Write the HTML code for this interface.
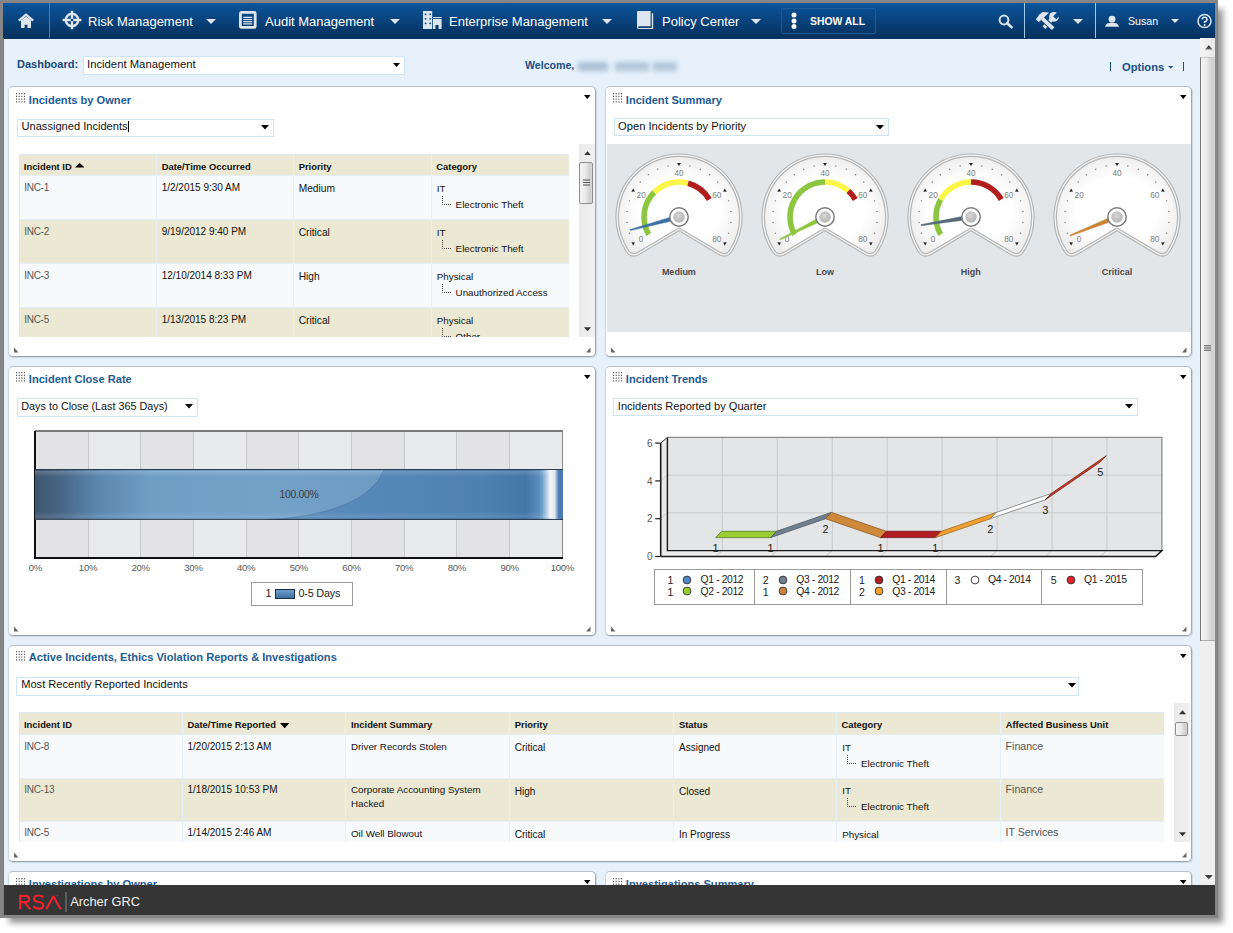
<!DOCTYPE html><html><head><meta charset="utf-8"><style>
*{box-sizing:border-box;margin:0;padding:0}
html,body{width:1233px;height:933px;overflow:hidden;background:#fff;font-family:"Liberation Sans",sans-serif;}
.a{position:absolute}
#frame{position:absolute;left:0;top:0;width:1217.8px;height:917.5px;background:#868686;box-shadow:7px 7px 6px -2px rgba(0,0,0,.42)}
#app{position:absolute;left:3px;top:3px;width:1212px;height:912px;background:#e6f1fb;overflow:hidden}
#nav{position:absolute;left:0;top:0;width:1212px;height:36.2px;background:linear-gradient(#0b559b,#062f5c)}
.nt{position:absolute;color:#fff;font-size:13px;white-space:nowrap;top:11px}
.tri{position:absolute;width:0;height:0;border-left:5px solid transparent;border-right:5px solid transparent;border-top:5px solid #dfe6ee}
.sep{position:absolute;top:0;width:1px;height:35px;background:#4f86bd}
#foot{position:absolute;left:0;top:882px;width:1212px;height:30px;background:#353535}
.panel{position:absolute;background:#fff;border:1px solid #aab6c0;border-left-color:#c9d8e5;border-top-color:#b3c0cb;border-right-color:#9eabb6;border-bottom-color:#97a4af;border-radius:5px;box-shadow:0.5px 1px 1px rgba(0,0,0,.10)}
.ptitle{position:absolute;left:20px;top:6px;color:#1d5b94;font-weight:bold;font-size:11.2px;white-space:nowrap}
.grip{position:absolute;left:7px;top:6px;width:9px;height:10px;background-image:radial-gradient(circle,#777 0.6px,transparent 0.9px);background-size:2.4px 2.4px}
.pdd{position:absolute;width:0;height:0;border-left:3.5px solid transparent;border-right:3.5px solid transparent;border-top:4px solid #000}
.sel{position:absolute;background:#fff;border:1px solid #c6def2;font-size:11.3px;color:#111;white-space:nowrap;padding-left:5px;line-height:17px}
.sel .dd{position:absolute;right:8px;top:7px;width:0;height:0;border-left:4px solid transparent;border-right:4px solid transparent;border-top:5px solid #000}
</style></head><body>
<div id="frame"></div><div id="app">
<div class="a" style="left:0.00px;top:35.00px;width:1.00px;height:847.00px;background:#5584b5;z-index:5"></div>
<div id="nav">
<svg class="a" style="left:14px;top:10px" width="18" height="17" viewBox="0 0 18 17"><path d="M1.8,7.6 L9,1.6 L16.2,7.6" fill="none" stroke="#dde5ee" stroke-width="2.2" stroke-linejoin="miter"/><path d="M4,7.2 L9,3.4 L14,7.2 L14,15 L10.4,15 L10.4,11.8 L7.6,11.8 L7.6,15 L4,15 Z" fill="#dde5ee"/></svg>
<div class="sep" style="left:46px;background:#4a80b8"></div>
<svg class="a" style="left:58px;top:6px" width="22" height="22" viewBox="0 0 22 22"><circle cx="11" cy="11" r="6.2" fill="none" stroke="#dde5ee" stroke-width="2.4"/><path d="M11,1.8 V20.2 M1.6,11 H20.4" stroke="#dde5ee" stroke-width="2.4"/><circle cx="11" cy="11" r="1.3" fill="#0a3f78"/></svg>
<div class="nt" style="left:85px">Risk Management</div>
<div class="tri" style="left:203px;top:16px"></div>
<svg class="a" style="left:235px;top:7px" width="20" height="20" viewBox="0 0 20 20"><rect x="2.4" y="2.4" width="14.8" height="15" rx="1" fill="none" stroke="#dde5ee" stroke-width="2.8"/><path d="M5.2,7.3 H14.2 M5.2,9.5 H14.2 M5.2,11.7 H14.2 M5.2,13.8 H14.2" stroke="#dde5ee" stroke-width="1.2"/></svg>
<div class="nt" style="left:262px">Audit Management</div>
<div class="tri" style="left:387px;top:16px"></div>
<svg class="a" style="left:419px;top:7px" width="21" height="20" viewBox="0 0 21 20"><rect x="1" y="1" width="9.2" height="18" fill="#dde5ee"/><rect x="11" y="7" width="8.6" height="1.1" fill="#dde5ee"/><rect x="11" y="9" width="8.6" height="10" fill="#dde5ee"/><rect x="13.4" y="15" width="3.2" height="4" fill="#0a3c72"/><g fill="#0a3c72"><circle cx="3.6" cy="4.3" r="0.9"/><circle cx="8.2" cy="4.3" r="0.9"/><circle cx="3.6" cy="8.8" r="0.9"/><circle cx="8.2" cy="8.8" r="0.9"/><circle cx="3.6" cy="13.3" r="0.9"/><circle cx="8.2" cy="13.3" r="0.9"/></g></svg>
<div class="nt" style="left:446px">Enterprise Management</div>
<div class="tri" style="left:599px;top:16px"></div>
<svg class="a" style="left:633px;top:7px" width="19" height="20" viewBox="0 0 19 20"><path d="M1,2.2 Q1,1 2.2,1 H14.6 V16.2 H3.2 Q2,16.2 2,17.2 Q2,18 3.2,18 H15.8 V3.2 H17.2 V19 H2.4 Q1,19 1,17.6 Z" fill="#dde5ee"/></svg>
<div class="nt" style="left:659px">Policy Center</div>
<div class="tri" style="left:748px;top:16px"></div>
<div class="a" style="left:778px;top:5px;width:95px;height:26px;border:1px solid #1d5a98;border-radius:2px"></div>
<svg class="a" style="left:787px;top:8px" width="8" height="18" viewBox="0 0 8 18"><circle cx="4" cy="4" r="2.5" fill="#fff"/><circle cx="4" cy="10" r="2.5" fill="#fff"/><circle cx="4" cy="15.5" r="2.5" fill="#fff"/></svg>
<div class="nt" style="left:807px;top:12.6px;font-size:10.4px;font-weight:bold">SHOW ALL</div>
<svg class="a" style="left:994px;top:10px" width="18" height="17" viewBox="0 0 18 17"><circle cx="7" cy="7" r="4.4" fill="none" stroke="#dde5ee" stroke-width="2"/><path d="M10.2,10.2 L14.6,14.2" stroke="#dde5ee" stroke-width="2.6" stroke-linecap="round"/></svg>
<div class="sep" style="left:1021px;background:#9cc8ec"></div>
<svg class="a" style="left:1027px;top:5px" width="36" height="24" viewBox="0 0 36 24"><defs><mask id="wm"><rect x="0" y="0" width="36" height="24" fill="#fff"/><path d="M23.2,8.2 L28.5,2.9 L31.5,5.9 L26.2,11.2 Z" fill="#000"/></mask></defs><g mask="url(#wm)"><circle cx="24" cy="8.8" r="4.9" fill="#dde5ee"/></g><path d="M22.5,10.5 L14,19.6" stroke="#dde5ee" stroke-width="4"/><path d="M12.4,10.6 L23.2,20.6" stroke="#0b3f77" stroke-width="5.6"/><path d="M12.4,10.6 L23.2,20.6" stroke="#dde5ee" stroke-width="3.8"/><path d="M5.8,11.4 L9.3,6.6 L12.6,4.1 L19,4.4 L14,9.6 L8.8,14 Z" fill="#dde5ee"/></svg>
<div class="tri" style="left:1070px;top:16px"></div>
<div class="sep" style="left:1092px;background:#9cc8ec"></div>
<svg class="a" style="left:1101px;top:11px" width="17" height="14" viewBox="0 0 17 14"><circle cx="8" cy="5.2" r="3.4" fill="#dde5ee"/><path d="M1,12.8 Q2,9.2 5.2,9 H10.8 Q14,9.2 15,12.8 Z" fill="#dde5ee"/></svg>
<div class="nt" style="left:1125px;top:12px;font-size:10.6px">Susan</div>
<div class="tri" style="left:1168px;top:16px;border-left-width:4.5px;border-right-width:4.5px;border-top-width:4.5px"></div>
<svg class="a" style="left:1193px;top:10px" width="17" height="17" viewBox="0 0 17 17"><circle cx="8.5" cy="8.1" r="6.5" fill="none" stroke="#dde5ee" stroke-width="1.5"/><path d="M6.2,6.6 Q6.2,4.2 8.6,4.2 Q11,4.2 11,6.4 Q11,8 8.6,9 V10" fill="none" stroke="#dde5ee" stroke-width="1.6"/><circle cx="8.6" cy="12" r="1" fill="#dde5ee"/></svg>
</div>
<div class="a" style="left:14.00px;top:56.49px;font-size:11px;line-height:11px;font-weight:700;color:#1a4878;white-space:nowrap;">Dashboard:</div>
<div class="a" style="left:79.50px;top:52.50px;width:322.00px;height:19.00px;background:#fff;border:1px solid #cde5f8"></div>
<div class="a" style="left:84.00px;top:56.23px;font-size:11.3px;line-height:11.3px;font-weight:400;color:#111;white-space:nowrap;">Incident Management</div>
<svg class="a" style="left:390.00px;top:60.00px;" width="7" height="4" viewBox="0 0 7 4"><path d="M0,0 H7 L3.5,4 Z" fill="#000"/></svg>
<div class="a" style="left:522.00px;top:57.03px;font-size:10.6px;line-height:10.6px;font-weight:700;color:#1d4e85;white-space:nowrap;">Welcome,</div>
<div class="a" style="left:574.00px;top:56.50px;width:100.00px;height:13.00px;filter:blur(2.6px)"><div class="a" style="left:1px;top:2.5px;width:30px;height:9px;background:rgba(90,125,160,.42)"></div><div class="a" style="left:38px;top:2.5px;width:34px;height:9px;background:rgba(90,125,160,.38)"></div><div class="a" style="left:76px;top:2.5px;width:24px;height:9px;background:rgba(90,125,160,.38)"></div></div>
<div class="a" style="left:1107.00px;top:58.50px;width:1.30px;height:9.30px;background:#1d4e85"></div>
<div class="a" style="left:1119.00px;top:58.52px;font-size:11.2px;line-height:11.2px;font-weight:700;color:#1d4e85;white-space:nowrap;">Options</div>
<svg class="a" style="left:1164.50px;top:63.20px;" width="5.5" height="2.6" viewBox="0 0 5.5 2.6"><path d="M0,0 H5.5 L2.75,2.6 Z" fill="#1d4e85"/></svg>
<div class="a" style="left:1180.00px;top:58.50px;width:1.30px;height:9.30px;background:#1d4e85"></div>
<div class="panel" style="left:5.00px;top:83.00px;width:588.00px;height:271.00px;"></div>
<svg class="a" style="left:11.50px;top:90.40px;" width="10" height="11" viewBox="0 0 10 11"><rect x="1.00" y="0.00" width="1.1" height="1.3" fill="#5a5a5a"/><rect x="1.00" y="2.75" width="1.1" height="1.3" fill="#5a5a5a"/><rect x="1.00" y="5.50" width="1.1" height="1.3" fill="#5a5a5a"/><rect x="1.00" y="8.25" width="1.1" height="1.3" fill="#5a5a5a"/><rect x="3.65" y="0.00" width="1.1" height="1.3" fill="#5a5a5a"/><rect x="3.65" y="2.75" width="1.1" height="1.3" fill="#5a5a5a"/><rect x="3.65" y="5.50" width="1.1" height="1.3" fill="#5a5a5a"/><rect x="3.65" y="8.25" width="1.1" height="1.3" fill="#5a5a5a"/><rect x="6.30" y="0.00" width="1.1" height="1.3" fill="#5a5a5a"/><rect x="6.30" y="2.75" width="1.1" height="1.3" fill="#5a5a5a"/><rect x="6.30" y="5.50" width="1.1" height="1.3" fill="#5a5a5a"/><rect x="6.30" y="8.25" width="1.1" height="1.3" fill="#5a5a5a"/><rect x="8.95" y="0.00" width="1.1" height="1.3" fill="#5a5a5a"/><rect x="8.95" y="2.75" width="1.1" height="1.3" fill="#5a5a5a"/><rect x="8.95" y="5.50" width="1.1" height="1.3" fill="#5a5a5a"/><rect x="8.95" y="8.25" width="1.1" height="1.3" fill="#5a5a5a"/></svg>
<div class="a" style="left:25.80px;top:91.60px;font-size:11.1px;line-height:11.1px;font-weight:700;color:#1d5b94;white-space:nowrap;">Incidents by Owner</div>
<svg class="a" style="left:581.00px;top:92.00px;" width="6.5" height="4.2" viewBox="0 0 6.5 4.2"><path d="M0,0 H6.5 L3.25,4.2 Z" fill="#000"/></svg>
<svg class="a" style="left:9.50px;top:343.50px;" width="7" height="7" viewBox="0 0 7 7"><path d="M1,0.5 L1,5.5 L5.5,5.5 Z" fill="#666"/></svg>
<svg class="a" style="left:582.00px;top:343.50px;" width="7" height="7" viewBox="0 0 7 7"><path d="M5.5,0.5 L5.5,5.5 L1,5.5 Z" fill="#666"/></svg>
<div class="panel" style="left:602.00px;top:83.00px;width:587.00px;height:271.00px;"></div>
<svg class="a" style="left:608.50px;top:90.40px;" width="10" height="11" viewBox="0 0 10 11"><rect x="1.00" y="0.00" width="1.1" height="1.3" fill="#5a5a5a"/><rect x="1.00" y="2.75" width="1.1" height="1.3" fill="#5a5a5a"/><rect x="1.00" y="5.50" width="1.1" height="1.3" fill="#5a5a5a"/><rect x="1.00" y="8.25" width="1.1" height="1.3" fill="#5a5a5a"/><rect x="3.65" y="0.00" width="1.1" height="1.3" fill="#5a5a5a"/><rect x="3.65" y="2.75" width="1.1" height="1.3" fill="#5a5a5a"/><rect x="3.65" y="5.50" width="1.1" height="1.3" fill="#5a5a5a"/><rect x="3.65" y="8.25" width="1.1" height="1.3" fill="#5a5a5a"/><rect x="6.30" y="0.00" width="1.1" height="1.3" fill="#5a5a5a"/><rect x="6.30" y="2.75" width="1.1" height="1.3" fill="#5a5a5a"/><rect x="6.30" y="5.50" width="1.1" height="1.3" fill="#5a5a5a"/><rect x="6.30" y="8.25" width="1.1" height="1.3" fill="#5a5a5a"/><rect x="8.95" y="0.00" width="1.1" height="1.3" fill="#5a5a5a"/><rect x="8.95" y="2.75" width="1.1" height="1.3" fill="#5a5a5a"/><rect x="8.95" y="5.50" width="1.1" height="1.3" fill="#5a5a5a"/><rect x="8.95" y="8.25" width="1.1" height="1.3" fill="#5a5a5a"/></svg>
<div class="a" style="left:622.80px;top:91.60px;font-size:11.1px;line-height:11.1px;font-weight:700;color:#1d5b94;white-space:nowrap;">Incident Summary</div>
<svg class="a" style="left:1177.00px;top:92.00px;" width="6.5" height="4.2" viewBox="0 0 6.5 4.2"><path d="M0,0 H6.5 L3.25,4.2 Z" fill="#000"/></svg>
<svg class="a" style="left:606.50px;top:343.50px;" width="7" height="7" viewBox="0 0 7 7"><path d="M1,0.5 L1,5.5 L5.5,5.5 Z" fill="#666"/></svg>
<svg class="a" style="left:1178.00px;top:343.50px;" width="7" height="7" viewBox="0 0 7 7"><path d="M5.5,0.5 L5.5,5.5 L1,5.5 Z" fill="#666"/></svg>
<div class="panel" style="left:5.00px;top:363.00px;width:588.00px;height:270.00px;"></div>
<svg class="a" style="left:11.50px;top:369.30px;" width="10" height="11" viewBox="0 0 10 11"><rect x="1.00" y="0.00" width="1.1" height="1.3" fill="#5a5a5a"/><rect x="1.00" y="2.75" width="1.1" height="1.3" fill="#5a5a5a"/><rect x="1.00" y="5.50" width="1.1" height="1.3" fill="#5a5a5a"/><rect x="1.00" y="8.25" width="1.1" height="1.3" fill="#5a5a5a"/><rect x="3.65" y="0.00" width="1.1" height="1.3" fill="#5a5a5a"/><rect x="3.65" y="2.75" width="1.1" height="1.3" fill="#5a5a5a"/><rect x="3.65" y="5.50" width="1.1" height="1.3" fill="#5a5a5a"/><rect x="3.65" y="8.25" width="1.1" height="1.3" fill="#5a5a5a"/><rect x="6.30" y="0.00" width="1.1" height="1.3" fill="#5a5a5a"/><rect x="6.30" y="2.75" width="1.1" height="1.3" fill="#5a5a5a"/><rect x="6.30" y="5.50" width="1.1" height="1.3" fill="#5a5a5a"/><rect x="6.30" y="8.25" width="1.1" height="1.3" fill="#5a5a5a"/><rect x="8.95" y="0.00" width="1.1" height="1.3" fill="#5a5a5a"/><rect x="8.95" y="2.75" width="1.1" height="1.3" fill="#5a5a5a"/><rect x="8.95" y="5.50" width="1.1" height="1.3" fill="#5a5a5a"/><rect x="8.95" y="8.25" width="1.1" height="1.3" fill="#5a5a5a"/></svg>
<div class="a" style="left:25.80px;top:370.50px;font-size:11.1px;line-height:11.1px;font-weight:700;color:#1d5b94;white-space:nowrap;">Incident Close Rate</div>
<svg class="a" style="left:581.00px;top:372.00px;" width="6.5" height="4.2" viewBox="0 0 6.5 4.2"><path d="M0,0 H6.5 L3.25,4.2 Z" fill="#000"/></svg>
<svg class="a" style="left:9.50px;top:622.50px;" width="7" height="7" viewBox="0 0 7 7"><path d="M1,0.5 L1,5.5 L5.5,5.5 Z" fill="#666"/></svg>
<svg class="a" style="left:582.00px;top:622.50px;" width="7" height="7" viewBox="0 0 7 7"><path d="M5.5,0.5 L5.5,5.5 L1,5.5 Z" fill="#666"/></svg>
<div class="panel" style="left:602.00px;top:363.00px;width:587.00px;height:270.00px;"></div>
<svg class="a" style="left:608.50px;top:369.30px;" width="10" height="11" viewBox="0 0 10 11"><rect x="1.00" y="0.00" width="1.1" height="1.3" fill="#5a5a5a"/><rect x="1.00" y="2.75" width="1.1" height="1.3" fill="#5a5a5a"/><rect x="1.00" y="5.50" width="1.1" height="1.3" fill="#5a5a5a"/><rect x="1.00" y="8.25" width="1.1" height="1.3" fill="#5a5a5a"/><rect x="3.65" y="0.00" width="1.1" height="1.3" fill="#5a5a5a"/><rect x="3.65" y="2.75" width="1.1" height="1.3" fill="#5a5a5a"/><rect x="3.65" y="5.50" width="1.1" height="1.3" fill="#5a5a5a"/><rect x="3.65" y="8.25" width="1.1" height="1.3" fill="#5a5a5a"/><rect x="6.30" y="0.00" width="1.1" height="1.3" fill="#5a5a5a"/><rect x="6.30" y="2.75" width="1.1" height="1.3" fill="#5a5a5a"/><rect x="6.30" y="5.50" width="1.1" height="1.3" fill="#5a5a5a"/><rect x="6.30" y="8.25" width="1.1" height="1.3" fill="#5a5a5a"/><rect x="8.95" y="0.00" width="1.1" height="1.3" fill="#5a5a5a"/><rect x="8.95" y="2.75" width="1.1" height="1.3" fill="#5a5a5a"/><rect x="8.95" y="5.50" width="1.1" height="1.3" fill="#5a5a5a"/><rect x="8.95" y="8.25" width="1.1" height="1.3" fill="#5a5a5a"/></svg>
<div class="a" style="left:622.80px;top:370.50px;font-size:11.1px;line-height:11.1px;font-weight:700;color:#1d5b94;white-space:nowrap;">Incident Trends</div>
<svg class="a" style="left:1177.00px;top:372.00px;" width="6.5" height="4.2" viewBox="0 0 6.5 4.2"><path d="M0,0 H6.5 L3.25,4.2 Z" fill="#000"/></svg>
<svg class="a" style="left:606.50px;top:622.50px;" width="7" height="7" viewBox="0 0 7 7"><path d="M1,0.5 L1,5.5 L5.5,5.5 Z" fill="#666"/></svg>
<svg class="a" style="left:1178.00px;top:622.50px;" width="7" height="7" viewBox="0 0 7 7"><path d="M5.5,0.5 L5.5,5.5 L1,5.5 Z" fill="#666"/></svg>
<div class="panel" style="left:5.00px;top:642.00px;width:1184.00px;height:217.00px;"></div>
<svg class="a" style="left:11.50px;top:647.90px;" width="10" height="11" viewBox="0 0 10 11"><rect x="1.00" y="0.00" width="1.1" height="1.3" fill="#5a5a5a"/><rect x="1.00" y="2.75" width="1.1" height="1.3" fill="#5a5a5a"/><rect x="1.00" y="5.50" width="1.1" height="1.3" fill="#5a5a5a"/><rect x="1.00" y="8.25" width="1.1" height="1.3" fill="#5a5a5a"/><rect x="3.65" y="0.00" width="1.1" height="1.3" fill="#5a5a5a"/><rect x="3.65" y="2.75" width="1.1" height="1.3" fill="#5a5a5a"/><rect x="3.65" y="5.50" width="1.1" height="1.3" fill="#5a5a5a"/><rect x="3.65" y="8.25" width="1.1" height="1.3" fill="#5a5a5a"/><rect x="6.30" y="0.00" width="1.1" height="1.3" fill="#5a5a5a"/><rect x="6.30" y="2.75" width="1.1" height="1.3" fill="#5a5a5a"/><rect x="6.30" y="5.50" width="1.1" height="1.3" fill="#5a5a5a"/><rect x="6.30" y="8.25" width="1.1" height="1.3" fill="#5a5a5a"/><rect x="8.95" y="0.00" width="1.1" height="1.3" fill="#5a5a5a"/><rect x="8.95" y="2.75" width="1.1" height="1.3" fill="#5a5a5a"/><rect x="8.95" y="5.50" width="1.1" height="1.3" fill="#5a5a5a"/><rect x="8.95" y="8.25" width="1.1" height="1.3" fill="#5a5a5a"/></svg>
<div class="a" style="left:25.80px;top:649.10px;font-size:11.1px;line-height:11.1px;font-weight:700;color:#1d5b94;white-space:nowrap;">Active Incidents, Ethics Violation Reports &amp; Investigations</div>
<svg class="a" style="left:1177.00px;top:651.00px;" width="6.5" height="4.2" viewBox="0 0 6.5 4.2"><path d="M0,0 H6.5 L3.25,4.2 Z" fill="#000"/></svg>
<svg class="a" style="left:9.50px;top:848.50px;" width="7" height="7" viewBox="0 0 7 7"><path d="M1,0.5 L1,5.5 L5.5,5.5 Z" fill="#666"/></svg>
<svg class="a" style="left:1178.00px;top:848.50px;" width="7" height="7" viewBox="0 0 7 7"><path d="M5.5,0.5 L5.5,5.5 L1,5.5 Z" fill="#666"/></svg>
<div class="panel" style="left:5.00px;top:868.00px;width:588.00px;height:89.00px;"></div>
<svg class="a" style="left:11.50px;top:874.90px;" width="10" height="11" viewBox="0 0 10 11"><rect x="1.00" y="0.00" width="1.1" height="1.3" fill="#5a5a5a"/><rect x="1.00" y="2.75" width="1.1" height="1.3" fill="#5a5a5a"/><rect x="1.00" y="5.50" width="1.1" height="1.3" fill="#5a5a5a"/><rect x="1.00" y="8.25" width="1.1" height="1.3" fill="#5a5a5a"/><rect x="3.65" y="0.00" width="1.1" height="1.3" fill="#5a5a5a"/><rect x="3.65" y="2.75" width="1.1" height="1.3" fill="#5a5a5a"/><rect x="3.65" y="5.50" width="1.1" height="1.3" fill="#5a5a5a"/><rect x="3.65" y="8.25" width="1.1" height="1.3" fill="#5a5a5a"/><rect x="6.30" y="0.00" width="1.1" height="1.3" fill="#5a5a5a"/><rect x="6.30" y="2.75" width="1.1" height="1.3" fill="#5a5a5a"/><rect x="6.30" y="5.50" width="1.1" height="1.3" fill="#5a5a5a"/><rect x="6.30" y="8.25" width="1.1" height="1.3" fill="#5a5a5a"/><rect x="8.95" y="0.00" width="1.1" height="1.3" fill="#5a5a5a"/><rect x="8.95" y="2.75" width="1.1" height="1.3" fill="#5a5a5a"/><rect x="8.95" y="5.50" width="1.1" height="1.3" fill="#5a5a5a"/><rect x="8.95" y="8.25" width="1.1" height="1.3" fill="#5a5a5a"/></svg>
<div class="a" style="left:25.80px;top:876.10px;font-size:11.1px;line-height:11.1px;font-weight:700;color:#1d5b94;white-space:nowrap;">Investigations by Owner</div>
<svg class="a" style="left:581.00px;top:877.00px;" width="6.5" height="4.2" viewBox="0 0 6.5 4.2"><path d="M0,0 H6.5 L3.25,4.2 Z" fill="#000"/></svg>
<svg class="a" style="left:9.50px;top:946.50px;" width="7" height="7" viewBox="0 0 7 7"><path d="M1,0.5 L1,5.5 L5.5,5.5 Z" fill="#666"/></svg>
<svg class="a" style="left:582.00px;top:946.50px;" width="7" height="7" viewBox="0 0 7 7"><path d="M5.5,0.5 L5.5,5.5 L1,5.5 Z" fill="#666"/></svg>
<div class="panel" style="left:602.00px;top:868.00px;width:587.00px;height:89.00px;"></div>
<svg class="a" style="left:608.50px;top:874.90px;" width="10" height="11" viewBox="0 0 10 11"><rect x="1.00" y="0.00" width="1.1" height="1.3" fill="#5a5a5a"/><rect x="1.00" y="2.75" width="1.1" height="1.3" fill="#5a5a5a"/><rect x="1.00" y="5.50" width="1.1" height="1.3" fill="#5a5a5a"/><rect x="1.00" y="8.25" width="1.1" height="1.3" fill="#5a5a5a"/><rect x="3.65" y="0.00" width="1.1" height="1.3" fill="#5a5a5a"/><rect x="3.65" y="2.75" width="1.1" height="1.3" fill="#5a5a5a"/><rect x="3.65" y="5.50" width="1.1" height="1.3" fill="#5a5a5a"/><rect x="3.65" y="8.25" width="1.1" height="1.3" fill="#5a5a5a"/><rect x="6.30" y="0.00" width="1.1" height="1.3" fill="#5a5a5a"/><rect x="6.30" y="2.75" width="1.1" height="1.3" fill="#5a5a5a"/><rect x="6.30" y="5.50" width="1.1" height="1.3" fill="#5a5a5a"/><rect x="6.30" y="8.25" width="1.1" height="1.3" fill="#5a5a5a"/><rect x="8.95" y="0.00" width="1.1" height="1.3" fill="#5a5a5a"/><rect x="8.95" y="2.75" width="1.1" height="1.3" fill="#5a5a5a"/><rect x="8.95" y="5.50" width="1.1" height="1.3" fill="#5a5a5a"/><rect x="8.95" y="8.25" width="1.1" height="1.3" fill="#5a5a5a"/></svg>
<div class="a" style="left:622.80px;top:876.10px;font-size:11.1px;line-height:11.1px;font-weight:700;color:#1d5b94;white-space:nowrap;">Investigations Summary</div>
<svg class="a" style="left:1177.00px;top:877.00px;" width="6.5" height="4.2" viewBox="0 0 6.5 4.2"><path d="M0,0 H6.5 L3.25,4.2 Z" fill="#000"/></svg>
<svg class="a" style="left:606.50px;top:946.50px;" width="7" height="7" viewBox="0 0 7 7"><path d="M1,0.5 L1,5.5 L5.5,5.5 Z" fill="#666"/></svg>
<svg class="a" style="left:1178.00px;top:946.50px;" width="7" height="7" viewBox="0 0 7 7"><path d="M5.5,0.5 L5.5,5.5 L1,5.5 Z" fill="#666"/></svg>
<div class="a" style="left:13.50px;top:115.50px;width:257.00px;height:18.30px;background:#fff;border:1px solid #cde5f8"></div>
<div class="a" style="left:18.50px;top:118.10px;font-size:11.1px;line-height:11.1px;font-weight:400;color:#111;white-space:nowrap;">Unassigned Incidents</div>
<svg class="a" style="left:257.50px;top:122.00px;" width="8" height="4.5" viewBox="0 0 8 4.5"><path d="M0,0 H8 L4.0,4.5 Z" fill="#000"/></svg>
<div class="a" style="left:124.50px;top:117.50px;width:1.00px;height:11.50px;background:#000"></div>
<div class="a" style="left:15.50px;top:150.80px;width:550.00px;height:182.80px;overflow:hidden">
<div class="a" style="left:0.00px;top:0.00px;width:550.00px;height:21.20px;background:#ebe9d3;border-top:1px solid #dbe9f5"></div>
<div class="a" style="left:0.00px;top:0.00px;width:1.00px;height:182.80px;background:#dbe9f5;z-index:2"></div>
<div class="a" style="left:0.00px;top:21.20px;width:550.00px;height:44.00px;background:#f8f9fb;border-top:1px solid #e2eef8"></div>
<div class="a" style="left:0.00px;top:65.20px;width:550.00px;height:44.00px;background:#ebe9d3;border-top:1px solid #e2eef8"></div>
<div class="a" style="left:0.00px;top:109.20px;width:550.00px;height:44.00px;background:#f8f9fb;border-top:1px solid #e2eef8"></div>
<div class="a" style="left:0.00px;top:153.20px;width:550.00px;height:44.00px;background:#ebe9d3;border-top:1px solid #e2eef8"></div>
<div class="a" style="left:137.40px;top:0.00px;width:1.00px;height:182.80px;background:#e6f0f9"></div>
<div class="a" style="left:274.40px;top:0.00px;width:1.00px;height:182.80px;background:#e6f0f9"></div>
<div class="a" style="left:412.00px;top:0.00px;width:1.00px;height:182.80px;background:#e6f0f9"></div>
<div class="a" style="left:5.30px;top:8.04px;font-size:9.4px;line-height:9.4px;font-weight:700;color:#111;white-space:nowrap;">Incident ID</div>
<div class="a" style="left:143.20px;top:8.04px;font-size:9.4px;line-height:9.4px;font-weight:700;color:#111;white-space:nowrap;">Date/Time Occurred</div>
<div class="a" style="left:280.20px;top:8.04px;font-size:9.4px;line-height:9.4px;font-weight:700;color:#111;white-space:nowrap;">Priority</div>
<div class="a" style="left:417.80px;top:8.04px;font-size:9.4px;line-height:9.4px;font-weight:700;color:#111;white-space:nowrap;">Category</div>
<div class="a" style="left:5.80px;top:28.93px;font-size:10px;line-height:10px;font-weight:400;color:#555;white-space:nowrap;letter-spacing:-0.3px">INC-1</div>
<div class="a" style="left:143.20px;top:28.93px;font-size:10px;line-height:10px;font-weight:400;color:#111;white-space:nowrap;">1/2/2015 9:30 AM</div>
<div class="a" style="left:280.20px;top:30.07px;font-size:10.2px;line-height:10.2px;font-weight:400;color:#111;white-space:nowrap;">Medium</div>
<div class="a" style="left:418.30px;top:30.00px;font-size:9.8px;line-height:9.8px;font-weight:400;color:#111;white-space:nowrap;">IT</div>
<svg class="a" style="left:423.30px;top:42.30px;" width="12" height="9" viewBox="0 0 12 9"><path d="M0.5,0 V8.5 H10" fill="none" stroke="#444" stroke-width="1" stroke-dasharray="1,1"/></svg>
<div class="a" style="left:437.10px;top:46.20px;font-size:9.8px;line-height:9.8px;font-weight:400;color:#111;white-space:nowrap;">Electronic Theft</div>
<div class="a" style="left:5.80px;top:72.93px;font-size:10px;line-height:10px;font-weight:400;color:#555;white-space:nowrap;letter-spacing:-0.3px">INC-2</div>
<div class="a" style="left:143.20px;top:72.93px;font-size:10px;line-height:10px;font-weight:400;color:#111;white-space:nowrap;">9/19/2012 9:40 PM</div>
<div class="a" style="left:280.20px;top:74.07px;font-size:10.2px;line-height:10.2px;font-weight:400;color:#111;white-space:nowrap;">Critical</div>
<div class="a" style="left:418.30px;top:74.00px;font-size:9.8px;line-height:9.8px;font-weight:400;color:#111;white-space:nowrap;">IT</div>
<svg class="a" style="left:423.30px;top:86.30px;" width="12" height="9" viewBox="0 0 12 9"><path d="M0.5,0 V8.5 H10" fill="none" stroke="#444" stroke-width="1" stroke-dasharray="1,1"/></svg>
<div class="a" style="left:437.10px;top:90.20px;font-size:9.8px;line-height:9.8px;font-weight:400;color:#111;white-space:nowrap;">Electronic Theft</div>
<div class="a" style="left:5.80px;top:116.94px;font-size:10px;line-height:10px;font-weight:400;color:#555;white-space:nowrap;letter-spacing:-0.3px">INC-3</div>
<div class="a" style="left:143.20px;top:116.94px;font-size:10px;line-height:10px;font-weight:400;color:#111;white-space:nowrap;">12/10/2014 8:33 PM</div>
<div class="a" style="left:280.20px;top:118.07px;font-size:10.2px;line-height:10.2px;font-weight:400;color:#111;white-space:nowrap;">High</div>
<div class="a" style="left:418.30px;top:118.00px;font-size:9.8px;line-height:9.8px;font-weight:400;color:#111;white-space:nowrap;">Physical</div>
<svg class="a" style="left:423.30px;top:130.30px;" width="12" height="9" viewBox="0 0 12 9"><path d="M0.5,0 V8.5 H10" fill="none" stroke="#444" stroke-width="1" stroke-dasharray="1,1"/></svg>
<div class="a" style="left:437.10px;top:134.20px;font-size:9.8px;line-height:9.8px;font-weight:400;color:#111;white-space:nowrap;">Unauthorized Access</div>
<div class="a" style="left:5.80px;top:160.94px;font-size:10px;line-height:10px;font-weight:400;color:#555;white-space:nowrap;letter-spacing:-0.3px">INC-5</div>
<div class="a" style="left:143.20px;top:160.94px;font-size:10px;line-height:10px;font-weight:400;color:#111;white-space:nowrap;">1/13/2015 8:23 PM</div>
<div class="a" style="left:280.20px;top:162.07px;font-size:10.2px;line-height:10.2px;font-weight:400;color:#111;white-space:nowrap;">Critical</div>
<div class="a" style="left:418.30px;top:162.00px;font-size:9.8px;line-height:9.8px;font-weight:400;color:#111;white-space:nowrap;">Physical</div>
<svg class="a" style="left:423.30px;top:174.30px;" width="12" height="9" viewBox="0 0 12 9"><path d="M0.5,0 V8.5 H10" fill="none" stroke="#444" stroke-width="1" stroke-dasharray="1,1"/></svg>
<div class="a" style="left:437.10px;top:178.20px;font-size:9.8px;line-height:9.8px;font-weight:400;color:#111;white-space:nowrap;">Other</div>
<svg class="a" style="left:56.50px;top:9.60px;" width="9.4" height="4.6" viewBox="0 0 9.4 4.6"><path d="M0,4.5 L4.7,0 L9.4,4.5 Z" fill="#000"/></svg>
</div>
<div class="a" style="left:575.90px;top:141.00px;width:15.90px;height:192.60px;background:linear-gradient(90deg,#eaeaea,#f0f0f0)"></div>
<svg class="a" style="left:580.90px;top:147.80px;" width="7" height="4.5" viewBox="0 0 7 4.5"><path d="M0,4.3 L3.5,0.2 L7,4.3 Z" fill="#333"/></svg>
<svg class="a" style="left:580.90px;top:323.90px;" width="7" height="4.5" viewBox="0 0 7 4.5"><path d="M0,0.2 L3.5,4.3 L7,0.2 Z" fill="#333"/></svg>
<div class="a" style="left:576.30px;top:159.30px;width:14.10px;height:42.20px;background:linear-gradient(90deg,#f4f4f4 0%,#e9e9e9 45%,#cfcfcf 85%,#dadada 100%);border:1px solid #8d8d8d;border-radius:2px"></div>
<svg class="a" style="left:579.90px;top:176.40px;" width="8" height="7" viewBox="0 0 8 7"><path d="M0,1 H7 M0,3.5 H7 M0,6 H7" stroke="#555" stroke-width="1.2"/></svg>
<div class="a" style="left:610.50px;top:115.20px;width:275.10px;height:18.30px;background:#fff;border:1px solid #cde5f8"></div>
<div class="a" style="left:615.00px;top:118.02px;font-size:11.2px;line-height:11.2px;font-weight:400;color:#111;white-space:nowrap;">Open Incidents by Priority</div>
<svg class="a" style="left:872.50px;top:121.70px;" width="8" height="4.5" viewBox="0 0 8 4.5"><path d="M0,0 H8 L4.0,4.5 Z" fill="#000"/></svg>
<div class="a" style="left:603.50px;top:141.00px;width:584.00px;height:187.50px;background:#e3e6e9"></div>
<svg class="a" style="left:605.90px;top:150.10px;" width="140" height="120" viewBox="0 0 140 120"><defs><radialGradient id="gf1" cx="50%" cy="55%" r="55%"><stop offset="0.6" stop-color="#ffffff"/><stop offset="1" stop-color="#ececec"/></radialGradient><radialGradient id="gc1" cx="45%" cy="40%" r="60%"><stop offset="0" stop-color="#d6d6d6"/><stop offset="1" stop-color="#b4b4b4"/></radialGradient></defs><path d="M121.83,97.66 A61.8,61.8 0 1 0 18.17,97.66 Q22.40,104.66 30.01,100.10 L70.00,76.20 L109.99,100.10 Q117.60,104.66 121.83,97.66 Z" fill="url(#gf1)" stroke="#b4b4b4" stroke-width="3.6" stroke-linejoin="round"/><path d="M121.83,97.66 A61.8,61.8 0 1 0 18.17,97.66 Q22.40,104.66 30.01,100.10 L70.00,76.20 L109.99,100.10 Q117.60,104.66 121.83,97.66 Z" fill="none" stroke="#f3f3f3" stroke-width="1.3" stroke-linejoin="round"/><path d="M39.69,81.50 A35,35 0 0 1 45.25,39.25" fill="none" stroke="#8cc63f" stroke-width="5.6"/><path d="M45.25,39.25 A35,35 0 0 1 79.06,30.19" fill="none" stroke="#fbf649" stroke-width="5.6"/><path d="M79.06,30.19 A35,35 0 0 1 100.31,46.50" fill="none" stroke="#b01e1e" stroke-width="5.6"/><path d="M25.92,89.45 L24.21,92.62 L22.32,89.35 Z" fill="#222"/><circle cx="20.35" cy="80.13" r="0.7" fill="#777"/><circle cx="18.09" cy="69.46" r="0.7" fill="#777"/><circle cx="18.09" cy="58.54" r="0.7" fill="#777"/><circle cx="20.35" cy="47.87" r="0.7" fill="#777"/><path d="M25.92,38.55 L22.32,38.65 L24.21,35.38 Z" fill="#222"/><circle cx="31.21" cy="29.07" r="0.7" fill="#777"/><circle cx="39.32" cy="21.77" r="0.7" fill="#777"/><circle cx="48.77" cy="16.31" r="0.7" fill="#777"/><circle cx="59.15" cy="12.94" r="0.7" fill="#777"/><path d="M70.00,13.10 L68.12,10.03 L71.88,10.03 Z" fill="#222"/><circle cx="80.85" cy="12.94" r="0.7" fill="#777"/><circle cx="91.23" cy="16.31" r="0.7" fill="#777"/><circle cx="100.68" cy="21.77" r="0.7" fill="#777"/><circle cx="108.79" cy="29.07" r="0.7" fill="#777"/><path d="M114.08,38.55 L115.79,35.38 L117.68,38.65 Z" fill="#222"/><circle cx="119.65" cy="47.87" r="0.7" fill="#777"/><circle cx="121.91" cy="58.54" r="0.7" fill="#777"/><circle cx="121.91" cy="69.46" r="0.7" fill="#777"/><circle cx="119.65" cy="80.13" r="0.7" fill="#777"/><path d="M114.08,89.45 L117.68,89.35 L115.79,92.62 Z" fill="#222"/><text x="32.15" y="88.85" font-size="8.2" fill="#808080" text-anchor="middle" font-family="Liberation Sans">0</text><text x="32.15" y="45.15" font-size="8.2" fill="#808080" text-anchor="middle" font-family="Liberation Sans">20</text><text x="70.00" y="23.30" font-size="8.2" fill="#808080" text-anchor="middle" font-family="Liberation Sans">40</text><text x="107.85" y="45.15" font-size="8.2" fill="#808080" text-anchor="middle" font-family="Liberation Sans">60</text><text x="107.85" y="88.85" font-size="8.2" fill="#808080" text-anchor="middle" font-family="Liberation Sans">80</text><path d="M70.60,66.22 L21.36,77.60 L21.08,76.54 L69.40,61.78 Z" fill="#3c6fa3" stroke="#3c6fa3" stroke-width="0.4"/><circle cx="70" cy="64" r="9.2" fill="#fff" stroke="#7b7b7b" stroke-width="1.5"/><circle cx="70" cy="64" r="5.8" fill="url(#gc1)"/></svg>
<div class="a" style="left:575.90px;width:200px;text-align:center;top:264.58px;font-size:9px;line-height:9px;font-weight:700;color:#4a4a4a;white-space:nowrap;">Medium</div>
<svg class="a" style="left:751.90px;top:150.10px;" width="140" height="120" viewBox="0 0 140 120"><defs><radialGradient id="gf2" cx="50%" cy="55%" r="55%"><stop offset="0.6" stop-color="#ffffff"/><stop offset="1" stop-color="#ececec"/></radialGradient><radialGradient id="gc2" cx="45%" cy="40%" r="60%"><stop offset="0" stop-color="#d6d6d6"/><stop offset="1" stop-color="#b4b4b4"/></radialGradient></defs><path d="M121.83,97.66 A61.8,61.8 0 1 0 18.17,97.66 Q22.40,104.66 30.01,100.10 L70.00,76.20 L109.99,100.10 Q117.60,104.66 121.83,97.66 Z" fill="url(#gf2)" stroke="#b4b4b4" stroke-width="3.6" stroke-linejoin="round"/><path d="M121.83,97.66 A61.8,61.8 0 1 0 18.17,97.66 Q22.40,104.66 30.01,100.10 L70.00,76.20 L109.99,100.10 Q117.60,104.66 121.83,97.66 Z" fill="none" stroke="#f3f3f3" stroke-width="1.3" stroke-linejoin="round"/><path d="M39.69,81.50 A35,35 0 0 1 70.00,29.00" fill="none" stroke="#8cc63f" stroke-width="5.6"/><path d="M70.00,29.00 A35,35 0 0 1 93.42,37.99" fill="none" stroke="#fbf649" stroke-width="5.6"/><path d="M93.42,37.99 A35,35 0 0 1 100.31,46.50" fill="none" stroke="#b01e1e" stroke-width="5.6"/><path d="M25.92,89.45 L24.21,92.62 L22.32,89.35 Z" fill="#222"/><circle cx="20.35" cy="80.13" r="0.7" fill="#777"/><circle cx="18.09" cy="69.46" r="0.7" fill="#777"/><circle cx="18.09" cy="58.54" r="0.7" fill="#777"/><circle cx="20.35" cy="47.87" r="0.7" fill="#777"/><path d="M25.92,38.55 L22.32,38.65 L24.21,35.38 Z" fill="#222"/><circle cx="31.21" cy="29.07" r="0.7" fill="#777"/><circle cx="39.32" cy="21.77" r="0.7" fill="#777"/><circle cx="48.77" cy="16.31" r="0.7" fill="#777"/><circle cx="59.15" cy="12.94" r="0.7" fill="#777"/><path d="M70.00,13.10 L68.12,10.03 L71.88,10.03 Z" fill="#222"/><circle cx="80.85" cy="12.94" r="0.7" fill="#777"/><circle cx="91.23" cy="16.31" r="0.7" fill="#777"/><circle cx="100.68" cy="21.77" r="0.7" fill="#777"/><circle cx="108.79" cy="29.07" r="0.7" fill="#777"/><path d="M114.08,38.55 L115.79,35.38 L117.68,38.65 Z" fill="#222"/><circle cx="119.65" cy="47.87" r="0.7" fill="#777"/><circle cx="121.91" cy="58.54" r="0.7" fill="#777"/><circle cx="121.91" cy="69.46" r="0.7" fill="#777"/><circle cx="119.65" cy="80.13" r="0.7" fill="#777"/><path d="M114.08,89.45 L117.68,89.35 L115.79,92.62 Z" fill="#222"/><text x="32.15" y="88.85" font-size="8.2" fill="#808080" text-anchor="middle" font-family="Liberation Sans">0</text><text x="32.15" y="45.15" font-size="8.2" fill="#808080" text-anchor="middle" font-family="Liberation Sans">20</text><text x="70.00" y="23.30" font-size="8.2" fill="#808080" text-anchor="middle" font-family="Liberation Sans">40</text><text x="107.85" y="45.15" font-size="8.2" fill="#808080" text-anchor="middle" font-family="Liberation Sans">60</text><text x="107.85" y="88.85" font-size="8.2" fill="#808080" text-anchor="middle" font-family="Liberation Sans">80</text><path d="M71.02,66.06 L25.01,86.95 L24.52,85.96 L68.98,61.94 Z" fill="#8cc63f" stroke="#8cc63f" stroke-width="0.4"/><circle cx="70" cy="64" r="9.2" fill="#fff" stroke="#7b7b7b" stroke-width="1.5"/><circle cx="70" cy="64" r="5.8" fill="url(#gc2)"/></svg>
<div class="a" style="left:721.90px;width:200px;text-align:center;top:264.58px;font-size:9px;line-height:9px;font-weight:700;color:#4a4a4a;white-space:nowrap;">Low</div>
<svg class="a" style="left:897.80px;top:150.10px;" width="140" height="120" viewBox="0 0 140 120"><defs><radialGradient id="gf3" cx="50%" cy="55%" r="55%"><stop offset="0.6" stop-color="#ffffff"/><stop offset="1" stop-color="#ececec"/></radialGradient><radialGradient id="gc3" cx="45%" cy="40%" r="60%"><stop offset="0" stop-color="#d6d6d6"/><stop offset="1" stop-color="#b4b4b4"/></radialGradient></defs><path d="M121.83,97.66 A61.8,61.8 0 1 0 18.17,97.66 Q22.40,104.66 30.01,100.10 L70.00,76.20 L109.99,100.10 Q117.60,104.66 121.83,97.66 Z" fill="url(#gf3)" stroke="#b4b4b4" stroke-width="3.6" stroke-linejoin="round"/><path d="M121.83,97.66 A61.8,61.8 0 1 0 18.17,97.66 Q22.40,104.66 30.01,100.10 L70.00,76.20 L109.99,100.10 Q117.60,104.66 121.83,97.66 Z" fill="none" stroke="#f3f3f3" stroke-width="1.3" stroke-linejoin="round"/><path d="M39.69,81.50 A35,35 0 0 1 39.69,46.50" fill="none" stroke="#8cc63f" stroke-width="5.6"/><path d="M39.69,46.50 A35,35 0 0 1 70.00,29.00" fill="none" stroke="#fbf649" stroke-width="5.6"/><path d="M70.00,29.00 A35,35 0 0 1 100.31,46.50" fill="none" stroke="#b01e1e" stroke-width="5.6"/><path d="M25.92,89.45 L24.21,92.62 L22.32,89.35 Z" fill="#222"/><circle cx="20.35" cy="80.13" r="0.7" fill="#777"/><circle cx="18.09" cy="69.46" r="0.7" fill="#777"/><circle cx="18.09" cy="58.54" r="0.7" fill="#777"/><circle cx="20.35" cy="47.87" r="0.7" fill="#777"/><path d="M25.92,38.55 L22.32,38.65 L24.21,35.38 Z" fill="#222"/><circle cx="31.21" cy="29.07" r="0.7" fill="#777"/><circle cx="39.32" cy="21.77" r="0.7" fill="#777"/><circle cx="48.77" cy="16.31" r="0.7" fill="#777"/><circle cx="59.15" cy="12.94" r="0.7" fill="#777"/><path d="M70.00,13.10 L68.12,10.03 L71.88,10.03 Z" fill="#222"/><circle cx="80.85" cy="12.94" r="0.7" fill="#777"/><circle cx="91.23" cy="16.31" r="0.7" fill="#777"/><circle cx="100.68" cy="21.77" r="0.7" fill="#777"/><circle cx="108.79" cy="29.07" r="0.7" fill="#777"/><path d="M114.08,38.55 L115.79,35.38 L117.68,38.65 Z" fill="#222"/><circle cx="119.65" cy="47.87" r="0.7" fill="#777"/><circle cx="121.91" cy="58.54" r="0.7" fill="#777"/><circle cx="121.91" cy="69.46" r="0.7" fill="#777"/><circle cx="119.65" cy="80.13" r="0.7" fill="#777"/><path d="M114.08,89.45 L117.68,89.35 L115.79,92.62 Z" fill="#222"/><text x="32.15" y="88.85" font-size="8.2" fill="#808080" text-anchor="middle" font-family="Liberation Sans">0</text><text x="32.15" y="45.15" font-size="8.2" fill="#808080" text-anchor="middle" font-family="Liberation Sans">20</text><text x="70.00" y="23.30" font-size="8.2" fill="#808080" text-anchor="middle" font-family="Liberation Sans">40</text><text x="107.85" y="45.15" font-size="8.2" fill="#808080" text-anchor="middle" font-family="Liberation Sans">60</text><text x="107.85" y="88.85" font-size="8.2" fill="#808080" text-anchor="middle" font-family="Liberation Sans">80</text><path d="M70.37,66.27 L20.25,72.70 L20.07,71.62 L69.63,61.73 Z" fill="#56697a" stroke="#56697a" stroke-width="0.4"/><circle cx="70" cy="64" r="9.2" fill="#fff" stroke="#7b7b7b" stroke-width="1.5"/><circle cx="70" cy="64" r="5.8" fill="url(#gc3)"/></svg>
<div class="a" style="left:867.80px;width:200px;text-align:center;top:264.58px;font-size:9px;line-height:9px;font-weight:700;color:#4a4a4a;white-space:nowrap;">High</div>
<svg class="a" style="left:1044.00px;top:150.10px;" width="140" height="120" viewBox="0 0 140 120"><defs><radialGradient id="gf4" cx="50%" cy="55%" r="55%"><stop offset="0.6" stop-color="#ffffff"/><stop offset="1" stop-color="#ececec"/></radialGradient><radialGradient id="gc4" cx="45%" cy="40%" r="60%"><stop offset="0" stop-color="#d6d6d6"/><stop offset="1" stop-color="#b4b4b4"/></radialGradient></defs><path d="M121.83,97.66 A61.8,61.8 0 1 0 18.17,97.66 Q22.40,104.66 30.01,100.10 L70.00,76.20 L109.99,100.10 Q117.60,104.66 121.83,97.66 Z" fill="url(#gf4)" stroke="#b4b4b4" stroke-width="3.6" stroke-linejoin="round"/><path d="M121.83,97.66 A61.8,61.8 0 1 0 18.17,97.66 Q22.40,104.66 30.01,100.10 L70.00,76.20 L109.99,100.10 Q117.60,104.66 121.83,97.66 Z" fill="none" stroke="#f3f3f3" stroke-width="1.3" stroke-linejoin="round"/><path d="M25.92,89.45 L24.21,92.62 L22.32,89.35 Z" fill="#222"/><circle cx="20.35" cy="80.13" r="0.7" fill="#777"/><circle cx="18.09" cy="69.46" r="0.7" fill="#777"/><circle cx="18.09" cy="58.54" r="0.7" fill="#777"/><circle cx="20.35" cy="47.87" r="0.7" fill="#777"/><path d="M25.92,38.55 L22.32,38.65 L24.21,35.38 Z" fill="#222"/><circle cx="31.21" cy="29.07" r="0.7" fill="#777"/><circle cx="39.32" cy="21.77" r="0.7" fill="#777"/><circle cx="48.77" cy="16.31" r="0.7" fill="#777"/><circle cx="59.15" cy="12.94" r="0.7" fill="#777"/><path d="M70.00,13.10 L68.12,10.03 L71.88,10.03 Z" fill="#222"/><circle cx="80.85" cy="12.94" r="0.7" fill="#777"/><circle cx="91.23" cy="16.31" r="0.7" fill="#777"/><circle cx="100.68" cy="21.77" r="0.7" fill="#777"/><circle cx="108.79" cy="29.07" r="0.7" fill="#777"/><path d="M114.08,38.55 L115.79,35.38 L117.68,38.65 Z" fill="#222"/><circle cx="119.65" cy="47.87" r="0.7" fill="#777"/><circle cx="121.91" cy="58.54" r="0.7" fill="#777"/><circle cx="121.91" cy="69.46" r="0.7" fill="#777"/><circle cx="119.65" cy="80.13" r="0.7" fill="#777"/><path d="M114.08,89.45 L117.68,89.35 L115.79,92.62 Z" fill="#222"/><text x="32.15" y="88.85" font-size="8.2" fill="#808080" text-anchor="middle" font-family="Liberation Sans">0</text><text x="32.15" y="45.15" font-size="8.2" fill="#808080" text-anchor="middle" font-family="Liberation Sans">20</text><text x="70.00" y="23.30" font-size="8.2" fill="#808080" text-anchor="middle" font-family="Liberation Sans">40</text><text x="107.85" y="45.15" font-size="8.2" fill="#808080" text-anchor="middle" font-family="Liberation Sans">60</text><text x="107.85" y="88.85" font-size="8.2" fill="#808080" text-anchor="middle" font-family="Liberation Sans">80</text><path d="M70.85,66.14 L23.25,83.10 L22.84,82.08 L69.15,61.86 Z" fill="#c98534" stroke="#c98534" stroke-width="0.4"/><circle cx="70" cy="64" r="9.2" fill="#fff" stroke="#7b7b7b" stroke-width="1.5"/><circle cx="70" cy="64" r="5.8" fill="url(#gc4)"/></svg>
<div class="a" style="left:1014.00px;width:200px;text-align:center;top:264.58px;font-size:9px;line-height:9px;font-weight:700;color:#4a4a4a;white-space:nowrap;">Critical</div>
<div class="a" style="left:13.80px;top:394.80px;width:180.80px;height:18.90px;background:#fff;border:1px solid #cde5f8"></div>
<div class="a" style="left:18.30px;top:398.06px;font-size:10.8px;line-height:10.8px;font-weight:400;color:#111;white-space:nowrap;">Days to Close (Last 365 Days)</div>
<svg class="a" style="left:182.00px;top:401.30px;" width="8" height="4.5" viewBox="0 0 8 4.5"><path d="M0,0 H8 L4.0,4.5 Z" fill="#000"/></svg>
<div class="a" style="left:32.30px;top:427.50px;width:52.70px;height:127.70px;background:#e3e3e5"></div>
<div class="a" style="left:85.00px;top:427.50px;width:52.70px;height:127.70px;background:#e8eaec"></div>
<div class="a" style="left:137.70px;top:427.50px;width:52.70px;height:127.70px;background:#e3e3e5"></div>
<div class="a" style="left:190.40px;top:427.50px;width:52.70px;height:127.70px;background:#e8eaec"></div>
<div class="a" style="left:243.10px;top:427.50px;width:52.70px;height:127.70px;background:#e3e3e5"></div>
<div class="a" style="left:295.80px;top:427.50px;width:52.70px;height:127.70px;background:#e8eaec"></div>
<div class="a" style="left:348.50px;top:427.50px;width:52.70px;height:127.70px;background:#e3e3e5"></div>
<div class="a" style="left:401.20px;top:427.50px;width:52.70px;height:127.70px;background:#e8eaec"></div>
<div class="a" style="left:453.90px;top:427.50px;width:52.70px;height:127.70px;background:#e3e3e5"></div>
<div class="a" style="left:506.60px;top:427.50px;width:52.70px;height:127.70px;background:#e8eaec"></div>
<div class="a" style="left:84.50px;top:427.50px;width:1.00px;height:127.70px;background:#c9c9c9"></div>
<div class="a" style="left:137.20px;top:427.50px;width:1.00px;height:127.70px;background:#c9c9c9"></div>
<div class="a" style="left:189.90px;top:427.50px;width:1.00px;height:127.70px;background:#c9c9c9"></div>
<div class="a" style="left:242.60px;top:427.50px;width:1.00px;height:127.70px;background:#c9c9c9"></div>
<div class="a" style="left:295.30px;top:427.50px;width:1.00px;height:127.70px;background:#c9c9c9"></div>
<div class="a" style="left:348.00px;top:427.50px;width:1.00px;height:127.70px;background:#c9c9c9"></div>
<div class="a" style="left:400.70px;top:427.50px;width:1.00px;height:127.70px;background:#c9c9c9"></div>
<div class="a" style="left:453.40px;top:427.50px;width:1.00px;height:127.70px;background:#c9c9c9"></div>
<div class="a" style="left:506.10px;top:427.50px;width:1.00px;height:127.70px;background:#c9c9c9"></div>
<div class="a" style="left:32.30px;top:427.00px;width:527.80px;height:1.50px;background:#7a7a7a"></div>
<div class="a" style="left:559.10px;top:427.50px;width:1.40px;height:127.70px;background:#8a8a8a"></div>
<div class="a" style="left:31.30px;top:427.50px;width:2.00px;height:128.70px;background:#111"></div>
<div class="a" style="left:31.30px;top:554.20px;width:529.00px;height:2.00px;background:#111"></div>
<div class="a" style="left:32.30px;top:465.70px;width:527.50px;height:51.60px;background:linear-gradient(90deg,#29435e 0%,#33557a 5%,#4a7aa6 12%,#5f93bf 22%,#6597c2 45%,#5f92c0 60%,#5688b6 85%,#4a7cab 93%,#6a9ccc 96%,#f4f6f8 97.6%,#e0e8f0 98.4%,#4a7cb0 99.2%);border-top:1.5px solid #2b3d52;border-bottom:1.5px solid #2b3d52"></div>
<div class="a" style="left:32.30px;top:467.50px;width:517.00px;height:48.50px;background:linear-gradient(180deg,rgba(255,255,255,0.18) 0%,rgba(255,255,255,0) 12%,rgba(0,0,0,0) 85%,rgba(255,255,255,0.12) 96%,rgba(0,0,0,0.1) 100%)"></div>
<svg class="a" style="left:32.30px;top:466.50px;" width="528" height="50" viewBox="0 0 528 50"><path d="M0,0 H349 Q330,45 228,50 H0 Z" fill="rgba(255,255,255,0.10)"/><path d="M349,0 Q330,45 228,50 H505 V0 Z" fill="rgba(20,70,130,0.10)"/><path d="M349,0 Q330,45 228,50" fill="none" stroke="rgba(30,60,100,0.22)" stroke-width="1"/></svg>
<div class="a" style="left:276.50px;top:487.20px;font-size:10.4px;line-height:10.4px;font-weight:400;color:#3d3d3d;white-space:nowrap;letter-spacing:-0.3px">100.00%</div>
<div class="a" style="left:-67.70px;width:200px;text-align:center;top:559.67px;font-size:9.6px;line-height:9.6px;font-weight:400;color:#5a5a5a;white-space:nowrap;letter-spacing:-0.3px">0%</div>
<div class="a" style="left:-15.00px;width:200px;text-align:center;top:559.67px;font-size:9.6px;line-height:9.6px;font-weight:400;color:#5a5a5a;white-space:nowrap;letter-spacing:-0.3px">10%</div>
<div class="a" style="left:37.70px;width:200px;text-align:center;top:559.67px;font-size:9.6px;line-height:9.6px;font-weight:400;color:#5a5a5a;white-space:nowrap;letter-spacing:-0.3px">20%</div>
<div class="a" style="left:90.40px;width:200px;text-align:center;top:559.67px;font-size:9.6px;line-height:9.6px;font-weight:400;color:#5a5a5a;white-space:nowrap;letter-spacing:-0.3px">30%</div>
<div class="a" style="left:143.10px;width:200px;text-align:center;top:559.67px;font-size:9.6px;line-height:9.6px;font-weight:400;color:#5a5a5a;white-space:nowrap;letter-spacing:-0.3px">40%</div>
<div class="a" style="left:195.80px;width:200px;text-align:center;top:559.67px;font-size:9.6px;line-height:9.6px;font-weight:400;color:#5a5a5a;white-space:nowrap;letter-spacing:-0.3px">50%</div>
<div class="a" style="left:248.50px;width:200px;text-align:center;top:559.67px;font-size:9.6px;line-height:9.6px;font-weight:400;color:#5a5a5a;white-space:nowrap;letter-spacing:-0.3px">60%</div>
<div class="a" style="left:301.20px;width:200px;text-align:center;top:559.67px;font-size:9.6px;line-height:9.6px;font-weight:400;color:#5a5a5a;white-space:nowrap;letter-spacing:-0.3px">70%</div>
<div class="a" style="left:353.90px;width:200px;text-align:center;top:559.67px;font-size:9.6px;line-height:9.6px;font-weight:400;color:#5a5a5a;white-space:nowrap;letter-spacing:-0.3px">80%</div>
<div class="a" style="left:406.60px;width:200px;text-align:center;top:559.67px;font-size:9.6px;line-height:9.6px;font-weight:400;color:#5a5a5a;white-space:nowrap;letter-spacing:-0.3px">90%</div>
<div class="a" style="left:459.30px;width:200px;text-align:center;top:559.67px;font-size:9.6px;line-height:9.6px;font-weight:400;color:#5a5a5a;white-space:nowrap;letter-spacing:-0.3px">100%</div>
<div class="a" style="left:248.10px;top:578.50px;width:101.60px;height:24.00px;background:#fff;border:1px solid #9a9a9a"></div>
<div class="a" style="left:262.50px;top:585.36px;font-size:10.8px;line-height:10.8px;font-weight:400;color:#222;white-space:nowrap;">1</div>
<div class="a" style="left:271.50px;top:585.50px;width:20.50px;height:10.00px;background:linear-gradient(180deg,#6c9fd0,#3d6e9e);border:1px solid #1c2e44"></div>
<div class="a" style="left:295.50px;top:585.36px;font-size:10.8px;line-height:10.8px;font-weight:400;color:#222;white-space:nowrap;letter-spacing:-0.2px">0-5 Days</div>
<div class="a" style="left:610.30px;top:394.60px;width:525.20px;height:18.90px;background:#fff;border:1px solid #cde5f8"></div>
<div class="a" style="left:614.80px;top:397.80px;font-size:11.1px;line-height:11.1px;font-weight:400;color:#111;white-space:nowrap;">Incidents Reported by Quarter</div>
<svg class="a" style="left:1122.30px;top:401.10px;" width="8" height="4.5" viewBox="0 0 8 4.5"><path d="M0,0 H8 L4.0,4.5 Z" fill="#000"/></svg>
<svg class="a" style="left:637.00px;top:427.00px;" width="540" height="140" viewBox="0 0 540 140"><path d="M27.40,7.40 L521.90,7.40 L521.90,120.60 L27.40,120.60 Z" fill="#e4e5e7"/><path d="M20.70,13.10 L27.40,7.40 L27.40,120.60 L20.70,126.50 Z" fill="#e9e9ea"/><path d="M20.70,126.50 L27.40,120.60 L521.90,120.60 L515.60,126.50 Z" fill="#ededee"/><path d="M82.34,7.40 L82.34,120.60 L75.64,126.50" fill="none" stroke="#cacaca" stroke-width="1"/><path d="M137.29,7.40 L137.29,120.60 L130.59,126.50" fill="none" stroke="#cacaca" stroke-width="1"/><path d="M192.23,7.40 L192.23,120.60 L185.53,126.50" fill="none" stroke="#cacaca" stroke-width="1"/><path d="M247.18,7.40 L247.18,120.60 L240.48,126.50" fill="none" stroke="#cacaca" stroke-width="1"/><path d="M302.12,7.40 L302.12,120.60 L295.42,126.50" fill="none" stroke="#cacaca" stroke-width="1"/><path d="M357.07,7.40 L357.07,120.60 L350.37,126.50" fill="none" stroke="#cacaca" stroke-width="1"/><path d="M412.01,7.40 L412.01,120.60 L405.31,126.50" fill="none" stroke="#cacaca" stroke-width="1"/><path d="M466.96,7.40 L466.96,120.60 L460.26,126.50" fill="none" stroke="#cacaca" stroke-width="1"/><path d="M20.70,88.70 L27.40,82.87 L521.90,82.87" fill="none" stroke="#cacaca" stroke-width="1"/><path d="M20.70,50.90 L27.40,45.13 L521.90,45.13" fill="none" stroke="#cacaca" stroke-width="1"/><path d="M27.40,7.40 L521.90,7.40 L521.90,120.60" fill="none" stroke="#8d8d8d" stroke-width="1.3"/><path d="M20.70,13.10 L27.40,7.40" fill="none" stroke="#333" stroke-width="1"/><path d="M27.40,7.40 L27.40,120.60 L521.90,120.60 L515.60,126.50 L20.70,126.50" fill="none" stroke="#1a1a1a" stroke-width="1.4"/><path d="M20.70,13.10 L20.70,126.50" fill="none" stroke="#1a1a1a" stroke-width="1.6"/><path d="M15.20,126.50 L20.70,126.50" stroke="#1a1a1a" stroke-width="1.2"/><path d="M15.20,88.70 L20.70,88.70" stroke="#1a1a1a" stroke-width="1.2"/><path d="M15.20,50.90 L20.70,50.90" stroke="#1a1a1a" stroke-width="1.2"/><path d="M15.20,13.10 L20.70,13.10" stroke="#1a1a1a" stroke-width="1.2"/><path d="M75.64,107.60 L130.59,107.60 L136.49,101.30 L81.54,101.30 Z" fill="#9acd32" stroke="#5d7a22" stroke-width="0.8" stroke-linejoin="round"/><path d="M130.59,107.60 L185.53,88.70 L191.43,82.40 L136.49,101.30 Z" fill="#6f8191" stroke="#4a5660" stroke-width="0.8" stroke-linejoin="round"/><path d="M185.53,88.70 L240.48,107.60 L246.38,101.30 L191.43,82.40 Z" fill="#d0883a" stroke="#8a5a26" stroke-width="0.8" stroke-linejoin="round"/><path d="M240.48,107.60 L295.42,107.60 L301.32,101.30 L246.38,101.30 Z" fill="#b01e23" stroke="#6e1215" stroke-width="0.8" stroke-linejoin="round"/><path d="M295.42,107.60 L350.37,88.70 L356.27,82.40 L301.32,101.30 Z" fill="#f2a12f" stroke="#9a6620" stroke-width="0.8" stroke-linejoin="round"/><path d="M350.37,88.70 L405.31,69.80 L411.21,63.50 L356.27,82.40 Z" fill="#ffffff" stroke="#777777" stroke-width="0.8" stroke-linejoin="round"/><path d="M405.31,69.80 L460.26,32.00 L466.16,25.70 L411.21,63.50 Z" fill="#c8372a" stroke="#7a2218" stroke-width="0.8" stroke-linejoin="round"/><text x="75.64" y="121.80" font-size="11" fill="#222" text-anchor="middle" font-family="Liberation Sans">1</text><text x="130.59" y="121.80" font-size="11" fill="#222" text-anchor="middle" font-family="Liberation Sans">1</text><text x="185.53" y="102.90" font-size="11" fill="#222" text-anchor="middle" font-family="Liberation Sans">2</text><text x="240.48" y="121.80" font-size="11" fill="#222" text-anchor="middle" font-family="Liberation Sans">1</text><text x="295.42" y="121.80" font-size="11" fill="#222" text-anchor="middle" font-family="Liberation Sans">1</text><text x="350.37" y="102.90" font-size="11" fill="#222" text-anchor="middle" font-family="Liberation Sans">2</text><text x="405.31" y="84.00" font-size="11" fill="#222" text-anchor="middle" font-family="Liberation Sans">3</text><text x="460.26" y="46.20" font-size="11" fill="#222" text-anchor="middle" font-family="Liberation Sans">5</text><text x="12.50" y="130.10" font-size="10" fill="#555" text-anchor="end" font-family="Liberation Sans">0</text><text x="12.50" y="92.30" font-size="10" fill="#555" text-anchor="end" font-family="Liberation Sans">2</text><text x="12.50" y="54.50" font-size="10" fill="#555" text-anchor="end" font-family="Liberation Sans">4</text><text x="12.50" y="16.70" font-size="10" fill="#555" text-anchor="end" font-family="Liberation Sans">6</text></svg>
<div class="a" style="left:650.70px;top:566.30px;width:489.30px;height:36.10px;background:#fff;border:1px solid #999"></div>
<div class="a" style="left:750.70px;top:566.30px;width:1.00px;height:36.10px;background:#999"></div>
<div class="a" style="left:846.60px;top:566.30px;width:1.00px;height:36.10px;background:#999"></div>
<div class="a" style="left:942.60px;top:566.30px;width:1.00px;height:36.10px;background:#999"></div>
<div class="a" style="left:1038.10px;top:566.30px;width:1.00px;height:36.10px;background:#999"></div>
<div class="a" style="left:567.40px;width:200px;text-align:center;top:571.93px;font-size:10.6px;line-height:10.6px;font-weight:400;color:#222;white-space:nowrap;">1</div>
<svg class="a" style="left:679.10px;top:571.50px;" width="10" height="10" viewBox="0 0 10 10"><circle cx="5" cy="5" r="3.9" fill="#4f87c2" stroke="#333" stroke-width="0.9"/></svg>
<div class="a" style="left:697.60px;top:572.10px;font-size:10.4px;line-height:10.4px;font-weight:400;color:#222;white-space:nowrap;letter-spacing:-0.4px">Q1 - 2012</div>
<div class="a" style="left:567.40px;width:200px;text-align:center;top:583.83px;font-size:10.6px;line-height:10.6px;font-weight:400;color:#222;white-space:nowrap;">1</div>
<svg class="a" style="left:679.10px;top:583.40px;" width="10" height="10" viewBox="0 0 10 10"><circle cx="5" cy="5" r="3.9" fill="#9acd32" stroke="#333" stroke-width="0.9"/></svg>
<div class="a" style="left:697.60px;top:584.00px;font-size:10.4px;line-height:10.4px;font-weight:400;color:#222;white-space:nowrap;letter-spacing:-0.4px">Q2 - 2012</div>
<div class="a" style="left:662.80px;width:200px;text-align:center;top:571.93px;font-size:10.6px;line-height:10.6px;font-weight:400;color:#222;white-space:nowrap;">2</div>
<svg class="a" style="left:774.90px;top:571.50px;" width="10" height="10" viewBox="0 0 10 10"><circle cx="5" cy="5" r="3.9" fill="#6e8090" stroke="#333" stroke-width="0.9"/></svg>
<div class="a" style="left:793.30px;top:572.10px;font-size:10.4px;line-height:10.4px;font-weight:400;color:#222;white-space:nowrap;letter-spacing:-0.4px">Q3 - 2012</div>
<div class="a" style="left:662.80px;width:200px;text-align:center;top:583.83px;font-size:10.6px;line-height:10.6px;font-weight:400;color:#222;white-space:nowrap;">1</div>
<svg class="a" style="left:774.90px;top:583.40px;" width="10" height="10" viewBox="0 0 10 10"><circle cx="5" cy="5" r="3.9" fill="#cd853f" stroke="#333" stroke-width="0.9"/></svg>
<div class="a" style="left:793.30px;top:584.00px;font-size:10.4px;line-height:10.4px;font-weight:400;color:#222;white-space:nowrap;letter-spacing:-0.4px">Q4 - 2012</div>
<div class="a" style="left:759.00px;width:200px;text-align:center;top:571.93px;font-size:10.6px;line-height:10.6px;font-weight:400;color:#222;white-space:nowrap;">1</div>
<svg class="a" style="left:871.00px;top:571.50px;" width="10" height="10" viewBox="0 0 10 10"><circle cx="5" cy="5" r="3.9" fill="#b01e23" stroke="#333" stroke-width="0.9"/></svg>
<div class="a" style="left:889.30px;top:572.10px;font-size:10.4px;line-height:10.4px;font-weight:400;color:#222;white-space:nowrap;letter-spacing:-0.4px">Q1 - 2014</div>
<div class="a" style="left:759.00px;width:200px;text-align:center;top:583.83px;font-size:10.6px;line-height:10.6px;font-weight:400;color:#222;white-space:nowrap;">2</div>
<svg class="a" style="left:871.00px;top:583.40px;" width="10" height="10" viewBox="0 0 10 10"><circle cx="5" cy="5" r="3.9" fill="#f2a12f" stroke="#333" stroke-width="0.9"/></svg>
<div class="a" style="left:889.30px;top:584.00px;font-size:10.4px;line-height:10.4px;font-weight:400;color:#222;white-space:nowrap;letter-spacing:-0.4px">Q3 - 2014</div>
<div class="a" style="left:854.50px;width:200px;text-align:center;top:571.93px;font-size:10.6px;line-height:10.6px;font-weight:400;color:#222;white-space:nowrap;">3</div>
<svg class="a" style="left:966.90px;top:571.50px;" width="10" height="10" viewBox="0 0 10 10"><circle cx="5" cy="5" r="3.9" fill="#ffffff" stroke="#333" stroke-width="0.9"/></svg>
<div class="a" style="left:985.00px;top:572.10px;font-size:10.4px;line-height:10.4px;font-weight:400;color:#222;white-space:nowrap;letter-spacing:-0.4px">Q4 - 2014</div>
<div class="a" style="left:950.60px;width:200px;text-align:center;top:571.93px;font-size:10.6px;line-height:10.6px;font-weight:400;color:#222;white-space:nowrap;">5</div>
<svg class="a" style="left:1062.70px;top:571.50px;" width="10" height="10" viewBox="0 0 10 10"><circle cx="5" cy="5" r="3.9" fill="#e8202a" stroke="#333" stroke-width="0.9"/></svg>
<div class="a" style="left:1081.00px;top:572.10px;font-size:10.4px;line-height:10.4px;font-weight:400;color:#222;white-space:nowrap;letter-spacing:-0.4px">Q1 - 2015</div>
<div class="a" style="left:13.30px;top:673.50px;width:1063.10px;height:19.10px;background:#fff;border:1px solid #cde5f8"></div>
<div class="a" style="left:18.20px;top:676.40px;font-size:11.1px;line-height:11.1px;font-weight:400;color:#111;white-space:nowrap;">Most Recently Reported Incidents</div>
<svg class="a" style="left:1064.50px;top:680.00px;" width="8" height="4.5" viewBox="0 0 8 4.5"><path d="M0,0 H8 L4.0,4.5 Z" fill="#000"/></svg>
<div class="a" style="left:15.70px;top:709.40px;width:1145.20px;height:129.40px;overflow:hidden">
<div class="a" style="left:0.00px;top:0.00px;width:1145.20px;height:21.50px;background:#ebe9d3;border-top:1px solid #dbe9f5"></div>
<div class="a" style="left:0.00px;top:0.00px;width:1.00px;height:129.40px;background:#dbe9f5;z-index:2"></div>
<div class="a" style="left:0.00px;top:21.50px;width:1145.20px;height:43.70px;background:#f8f9fb;border-top:1px solid #e2eef8"></div>
<div class="a" style="left:0.00px;top:65.20px;width:1145.20px;height:43.70px;background:#ebe9d3;border-top:1px solid #e2eef8"></div>
<div class="a" style="left:0.00px;top:108.90px;width:1145.20px;height:43.70px;background:#f8f9fb;border-top:1px solid #e2eef8"></div>
<div class="a" style="left:163.00px;top:0.00px;width:1.00px;height:129.40px;background:#e6f0f9"></div>
<div class="a" style="left:326.50px;top:0.00px;width:1.00px;height:129.40px;background:#e6f0f9"></div>
<div class="a" style="left:490.30px;top:0.00px;width:1.00px;height:129.40px;background:#e6f0f9"></div>
<div class="a" style="left:654.50px;top:0.00px;width:1.00px;height:129.40px;background:#e6f0f9"></div>
<div class="a" style="left:817.00px;top:0.00px;width:1.00px;height:129.40px;background:#e6f0f9"></div>
<div class="a" style="left:981.20px;top:0.00px;width:1.00px;height:129.40px;background:#e6f0f9"></div>
<div class="a" style="left:5.30px;top:8.04px;font-size:9.4px;line-height:9.4px;font-weight:700;color:#111;white-space:nowrap;">Incident ID</div>
<div class="a" style="left:168.80px;top:8.04px;font-size:9.4px;line-height:9.4px;font-weight:700;color:#111;white-space:nowrap;">Date/Time Reported</div>
<div class="a" style="left:332.30px;top:8.04px;font-size:9.4px;line-height:9.4px;font-weight:700;color:#111;white-space:nowrap;">Incident Summary</div>
<div class="a" style="left:496.10px;top:8.04px;font-size:9.4px;line-height:9.4px;font-weight:700;color:#111;white-space:nowrap;">Priority</div>
<div class="a" style="left:660.30px;top:8.04px;font-size:9.4px;line-height:9.4px;font-weight:700;color:#111;white-space:nowrap;">Status</div>
<div class="a" style="left:822.80px;top:8.04px;font-size:9.4px;line-height:9.4px;font-weight:700;color:#111;white-space:nowrap;">Category</div>
<div class="a" style="left:987.00px;top:8.04px;font-size:9.4px;line-height:9.4px;font-weight:700;color:#111;white-space:nowrap;">Affected Business Unit</div>
<div class="a" style="left:5.60px;top:29.24px;font-size:10px;line-height:10px;font-weight:400;color:#555;white-space:nowrap;letter-spacing:-0.3px">INC-8</div>
<div class="a" style="left:168.80px;top:29.24px;font-size:10px;line-height:10px;font-weight:400;color:#111;white-space:nowrap;">1/20/2015 2:13 AM</div>
<div class="a" style="left:332.30px;top:29.40px;font-size:9.8px;line-height:9.8px;font-weight:400;color:#111;white-space:nowrap;">Driver Records Stolen</div>
<div class="a" style="left:496.10px;top:31.03px;font-size:10px;line-height:10px;font-weight:400;color:#111;white-space:nowrap;">Critical</div>
<div class="a" style="left:660.30px;top:31.03px;font-size:10px;line-height:10px;font-weight:400;color:#111;white-space:nowrap;">Assigned</div>
<div class="a" style="left:823.50px;top:30.40px;font-size:9.8px;line-height:9.8px;font-weight:400;color:#111;white-space:nowrap;">IT</div>
<svg class="a" style="left:828.50px;top:42.70px;" width="12" height="9" viewBox="0 0 12 9"><path d="M0.5,0 V8.5 H10" fill="none" stroke="#444" stroke-width="1" stroke-dasharray="1,1"/></svg>
<div class="a" style="left:842.30px;top:46.60px;font-size:9.8px;line-height:9.8px;font-weight:400;color:#111;white-space:nowrap;">Electronic Theft</div>
<div class="a" style="left:986.90px;top:28.23px;font-size:10.6px;line-height:10.6px;font-weight:400;color:#555;white-space:nowrap;">Finance</div>
<div class="a" style="left:5.60px;top:72.63px;font-size:10px;line-height:10px;font-weight:400;color:#555;white-space:nowrap;letter-spacing:-0.3px">INC-13</div>
<div class="a" style="left:168.80px;top:72.63px;font-size:10px;line-height:10px;font-weight:400;color:#111;white-space:nowrap;">1/18/2015 10:53 PM</div>
<div class="a" style="left:332.30px;top:72.80px;font-size:9.8px;line-height:9.8px;font-weight:400;color:#111;white-space:nowrap;">Corporate Accounting System</div>
<div class="a" style="left:332.30px;top:86.80px;font-size:9.8px;line-height:9.8px;font-weight:400;color:#111;white-space:nowrap;">Hacked</div>
<div class="a" style="left:496.10px;top:74.43px;font-size:10px;line-height:10px;font-weight:400;color:#111;white-space:nowrap;">High</div>
<div class="a" style="left:660.30px;top:74.43px;font-size:10px;line-height:10px;font-weight:400;color:#111;white-space:nowrap;">Closed</div>
<div class="a" style="left:823.50px;top:73.80px;font-size:9.8px;line-height:9.8px;font-weight:400;color:#111;white-space:nowrap;">IT</div>
<svg class="a" style="left:828.50px;top:86.10px;" width="12" height="9" viewBox="0 0 12 9"><path d="M0.5,0 V8.5 H10" fill="none" stroke="#444" stroke-width="1" stroke-dasharray="1,1"/></svg>
<div class="a" style="left:842.30px;top:90.00px;font-size:9.8px;line-height:9.8px;font-weight:400;color:#111;white-space:nowrap;">Electronic Theft</div>
<div class="a" style="left:986.90px;top:71.63px;font-size:10.6px;line-height:10.6px;font-weight:400;color:#555;white-space:nowrap;">Finance</div>
<div class="a" style="left:5.60px;top:116.03px;font-size:10px;line-height:10px;font-weight:400;color:#555;white-space:nowrap;letter-spacing:-0.3px">INC-5</div>
<div class="a" style="left:168.80px;top:116.03px;font-size:10px;line-height:10px;font-weight:400;color:#111;white-space:nowrap;">1/14/2015 2:46 AM</div>
<div class="a" style="left:332.30px;top:116.20px;font-size:9.8px;line-height:9.8px;font-weight:400;color:#111;white-space:nowrap;">Oil Well Blowout</div>
<div class="a" style="left:496.10px;top:117.83px;font-size:10px;line-height:10px;font-weight:400;color:#111;white-space:nowrap;">Critical</div>
<div class="a" style="left:660.30px;top:117.83px;font-size:10px;line-height:10px;font-weight:400;color:#111;white-space:nowrap;">In Progress</div>
<div class="a" style="left:823.50px;top:117.80px;font-size:9.8px;line-height:9.8px;font-weight:400;color:#111;white-space:nowrap;">Physical</div>
<div class="a" style="left:986.90px;top:115.03px;font-size:10.6px;line-height:10.6px;font-weight:400;color:#555;white-space:nowrap;">IT Services</div>
<svg class="a" style="left:261.80px;top:10.20px;" width="9.4" height="5.4" viewBox="0 0 9.4 5.4"><path d="M0,0 L9.4,0 L4.7,5.4 Z" fill="#000"/></svg>
</div>
<div class="a" style="left:1171.10px;top:700.20px;width:15.70px;height:138.70px;background:linear-gradient(90deg,#eaeaea,#f0f0f0)"></div>
<svg class="a" style="left:1176.10px;top:707.00px;" width="7" height="4.5" viewBox="0 0 7 4.5"><path d="M0,4.3 L3.5,0.2 L7,4.3 Z" fill="#333"/></svg>
<svg class="a" style="left:1176.10px;top:829.20px;" width="7" height="4.5" viewBox="0 0 7 4.5"><path d="M0,0.2 L3.5,4.3 L7,0.2 Z" fill="#333"/></svg>
<div class="a" style="left:1171.50px;top:718.50px;width:13.90px;height:14.00px;background:linear-gradient(90deg,#f4f4f4 0%,#e9e9e9 45%,#cfcfcf 85%,#dadada 100%);border:1px solid #8d8d8d;border-radius:2px"></div>
<div class="a" style="left:1197.00px;top:35.00px;width:15.00px;height:847.00px;background:#efefef"></div>
<div class="a" style="left:1197.00px;top:35.00px;width:15.00px;height:19.00px;background:linear-gradient(90deg,#f4f4f4,#e8e8e8)"></div>
<svg class="a" style="left:1201.50px;top:42.20px;" width="8" height="5" viewBox="0 0 8 5"><defs><linearGradient id="su" x1="0" y1="0" x2="0" y2="1"><stop offset="0" stop-color="#111"/><stop offset="1" stop-color="#777"/></linearGradient></defs><path d="M0,4.6 L3.8,0.3 L7.6,4.6 Z" fill="url(#su)"/></svg>
<div class="a" style="left:1197.00px;top:54.00px;width:15.00px;height:584.00px;background:linear-gradient(90deg,#f6f6f6 0%,#ececec 35%,#cfcfcf 80%,#d8d8d8 100%);border-left:1px solid #777;border-top:1px solid #c8c8c8;border-bottom:1px solid #aaa"></div>
<svg class="a" style="left:1200.50px;top:342.00px;" width="8" height="7" viewBox="0 0 8 7"><path d="M0,0.8 H7 M0,3 H7 M0,5.2 H7" stroke="#555" stroke-width="1.1"/></svg>
<svg class="a" style="left:1201.50px;top:871.60px;" width="8" height="5" viewBox="0 0 8 5"><defs><linearGradient id="sa" x1="0" y1="0" x2="0" y2="1"><stop offset="0" stop-color="#111"/><stop offset="1" stop-color="#888"/></linearGradient></defs><path d="M0,0.3 L3.8,4.5 L7.6,0.3 Z" fill="url(#sa)"/></svg>
<div id="foot"></div>
<div class="a" style="left:0.00px;top:879.00px;width:1.00px;height:33.00px;background:#5584b5;z-index:5"></div>
<svg class="a" style="left:9.00px;top:885.00px;" width="52" height="24" viewBox="0 0 52 24"><g fill="none" stroke="#f5222d" stroke-width="2.1"><path d="M8.15,21.3 V7.9 H13.2 Q17.2,7.9 17.2,11 Q17.2,14.1 13.2,14.1 H8.4 M12.4,14.1 L18.3,21.3"/><path d="M31.3,9.2 Q29.8,7.5 26.6,7.5 Q22.1,7.5 22.1,10.7 Q22.1,13.4 26.6,14 Q31.2,14.6 31.2,17.7 Q31.2,20.6 26.6,20.6 Q23.1,20.6 21.3,18.5"/><path d="M34.3,21.3 L41.4,8.2 L48.6,21.3" stroke-linejoin="bevel"/></g><circle cx="45.5" cy="7.4" r="0.6" fill="#f5222d"/></svg>
<div class="a" style="left:61.80px;top:889.00px;width:2.00px;height:20.00px;background:#5e5e5e"></div>
<div class="a" style="left:67.30px;top:892.96px;font-size:12.8px;line-height:12.8px;font-weight:400;color:#f2f2f2;white-space:nowrap;">Archer GRC</div>
</div>
</body></html>
